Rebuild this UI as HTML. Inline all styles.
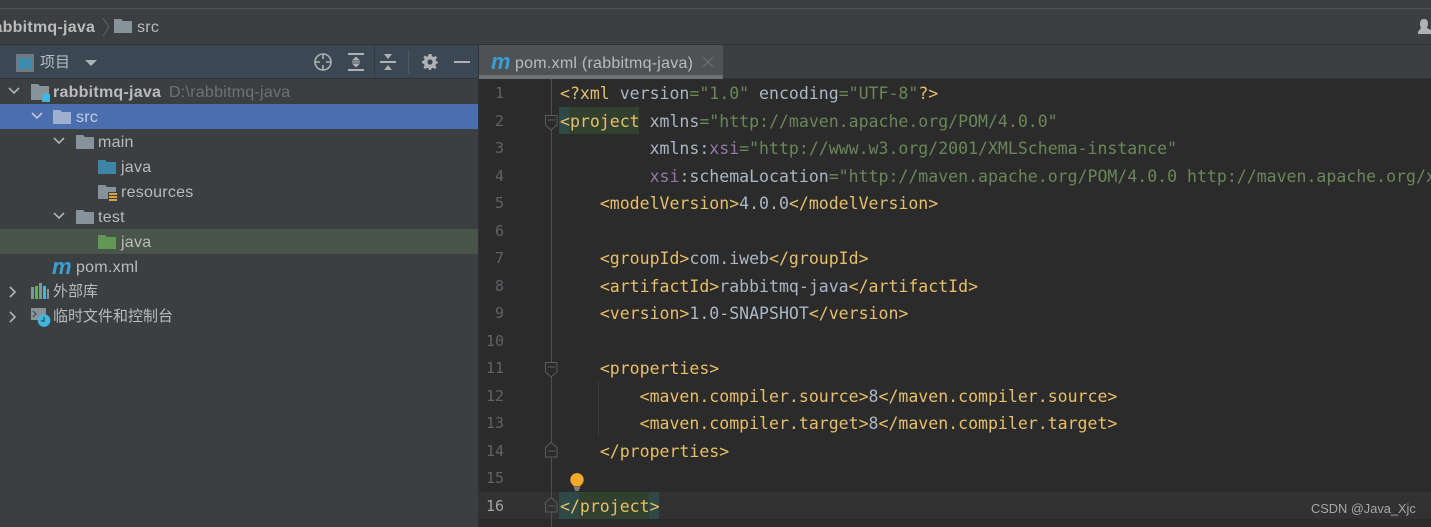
<!DOCTYPE html>
<html><head><meta charset="utf-8">
<style>
html,body{margin:0;padding:0;width:1431px;height:527px;overflow:hidden;background:#3c3f41}
.a{position:absolute}
.t{position:absolute;font:16px "Liberation Sans","Noto Sans CJK SC",sans-serif;letter-spacing:.25px;color:#bbbbbb;white-space:pre;line-height:20px}
.c{font-size:15px;letter-spacing:0}
.l{position:absolute;left:560px;width:871px;overflow:hidden;font:16.55px/27px "DejaVu Sans Mono",monospace;color:#a9b7c6;white-space:pre;height:27px}
.n{position:absolute;left:477px;width:27px;text-align:right;font:15px/27px "DejaVu Sans Mono",monospace;color:#606366}
.g{color:#e8bf6a}.s{color:#6a8759}.x{color:#9876aa}
.f{position:absolute;width:18px;height:14px}
.m{position:absolute;font:italic bold 22px/20px "Liberation Sans",sans-serif;color:#389fd6}
svg{position:absolute;overflow:visible}
</style></head><body>
<div class="a" style="left:0;top:8px;width:1431px;height:1px;background:#515151"></div>
<div class="a" style="left:0;top:44px;width:1431px;height:1px;background:#323232"></div>
<div class="a" style="left:0;top:16px;width:100px;height:24px;overflow:hidden"><div class="t" style="left:-13px;top:2px;font-weight:bold;color:#bbb">rabbitmq-java</div></div>
<svg style="left:100px;top:15px" width="12" height="24"><path d="M3 3L9 12L3 21" fill="none" stroke="#5e6163" stroke-width="1"/></svg>
<svg class="f" style="left:114px;top:19px"><path d="M0 0H7L9 2H18V14H0Z" fill="#87939a"/></svg>
<div class="t" style="left:137px;top:18px">src</div>
<div class="a" style="left:1418px;top:18px;width:13px;height:17px;overflow:hidden"><svg style="left:0;top:0" width="14" height="17"><path d="M6 1C9 1 10 3 10 6C10 8 9 9 9 10L13 12V16H0V14L3 10C2.5 9 2 8 2 6C2 3 3 1 6 1Z" fill="#afb1b3"/></svg></div>

<!-- project header -->
<div class="a" style="left:0;top:45px;width:478px;height:33px;background:#3c4754"></div>
<div class="a" style="left:0;top:78px;width:478px;height:1px;background:#323232"></div>
<div class="a" style="left:16px;top:54px;width:18px;height:18px;background:#6e7a82"></div>
<div class="a" style="left:18px;top:58px;width:14px;height:11px;background:#3d8cb0"></div>
<div class="t c" style="left:40px;top:53px;color:#b4bcc4">项目</div>
<svg style="left:85px;top:59px" width="12" height="8"><path d="M0 1H12L6 7Z" fill="#afb1b3"/></svg>
<svg style="left:314px;top:53px" width="18" height="18" fill="none" stroke="#afb1b3" stroke-width="1.6"><circle cx="9" cy="9" r="8"/><path d="M9 1V6M9 12V17M1 9H6M12 9H17"/></svg>
<svg style="left:348px;top:53px" width="16" height="18" fill="#afb1b3"><rect y="0" width="16" height="2"/><rect y="16" width="16" height="2"/><path d="M8 3.5L12 7.5H4ZM8 14.5L4 10.5H12Z"/><rect x="4" y="8.4" width="8" height="1.2"/></svg>
<svg style="left:380px;top:53px" width="16" height="18" fill="#afb1b3"><rect y="8" width="16" height="2"/><path d="M4 1H12L8 6ZM4 17H12L8 12Z"/></svg>
<div class="a" style="left:374px;top:45px;width:1px;height:33px;background:#323a43"></div>
<div class="a" style="left:408px;top:50px;width:1px;height:24px;background:#515a62"></div>
<svg style="left:422px;top:54px" width="16" height="16"><path d="M6.5 0H9.5L10 2.3L11.8 3.1L13.8 1.8L15 4L13.6 5.6L14 7L16 8V9L13.9 10L13.4 11.5L14.6 13.5L12.8 15L11 13.7L9.6 14.2L9 16H7L6.4 14.2L5 13.7L3.2 15L1.4 13.5L2.6 11.5L2.1 10L0 9V7L2.2 6.4L2.6 5L1.4 3L3.2 1.5L5 2.8L6.2 2.2Z" fill="#afb1b3"/><circle cx="8" cy="8" r="2.6" fill="#3c4754"/></svg>
<div class="a" style="left:454px;top:61px;width:16px;height:2px;background:#afb1b3"></div>

<!-- tree rows -->
<div class="a" style="left:0;top:104px;width:478px;height:25px;background:#4b6eaf"></div>
<div class="a" style="left:0;top:229px;width:478px;height:25px;background:#49544a"></div>
<svg style="left:0;top:0" width="100" height="330" fill="none" stroke="#afb1b3" stroke-width="1.6">
<path d="M9 88L14 93L19 88"/><path d="M32 113L37 118L42 113" stroke="#c0c8d8"/><path d="M54 138L59 143L64 138"/><path d="M54 213L59 218L64 213"/>
<path d="M10 287L15 292L10 297"/><path d="M10 312L15 317L10 322"/>
</svg>
<svg class="f" style="left:31px;top:84px;height:16px"><path d="M0 0H7L9 2H18V16H0Z" fill="#87939a"/><rect x="11" y="10" width="8" height="8" fill="#40b6e0"/></svg>
<div class="t" style="left:53px;top:83px;font-weight:bold">rabbitmq-java</div>
<div class="t" style="left:169px;top:83px;color:#6f7274">D:\rabbitmq-java</div>
<svg class="f" style="left:53px;top:110px"><path d="M0 0H7L9 2H18V14H0Z" fill="#9fb0cf"/></svg>
<div class="t" style="left:76px;top:108px;color:#c4cfe4">src</div>
<svg class="f" style="left:76px;top:135px"><path d="M0 0H7L9 2H18V14H0Z" fill="#87939a"/></svg>
<div class="t" style="left:98px;top:133px">main</div>
<svg class="f" style="left:98px;top:160px"><path d="M0 0H7L9 2H18V14H0Z" fill="#3d86a8"/></svg>
<div class="t" style="left:121px;top:158px">java</div>
<svg class="f" style="left:98px;top:185px"><path d="M0 0H7L9 2H18V14H0Z" fill="#87939a"/><rect x="10" y="7" width="9" height="10" fill="#3c3f41"/><path d="M11 9H19M11 12H19M11 15H19" stroke="#d9a343" stroke-width="2"/></svg>
<div class="t" style="left:121px;top:183px">resources</div>
<svg class="f" style="left:76px;top:210px"><path d="M0 0H7L9 2H18V14H0Z" fill="#87939a"/></svg>
<div class="t" style="left:98px;top:208px">test</div>
<svg class="f" style="left:98px;top:235px"><path d="M0 0H7L9 2H18V14H0Z" fill="#629755"/></svg>
<div class="t" style="left:121px;top:233px">java</div>
<div class="m" style="left:52px;top:257px">m</div>
<div class="t" style="left:76px;top:258px">pom.xml</div>
<svg style="left:31px;top:283px" width="18" height="16"><rect x="0" y="4" width="3" height="12" fill="#87939a"/><rect x="4" y="3" width="3" height="13" fill="#62b543"/><rect x="8" y="0" width="3" height="16" fill="#87939a"/><rect x="12" y="3" width="3" height="13" fill="#40b6e0"/><rect x="16" y="6" width="2" height="10" fill="#87939a"/></svg>
<div class="t c" style="left:53px;top:282px">外部库</div>
<svg style="left:31px;top:308px" width="20" height="19"><rect width="15" height="12" fill="#87939a"/><path d="M2 3L5 6L2 9" stroke="#3c3f41" fill="none"/><circle cx="13" cy="12.5" r="6.3" fill="#40b6e0"/><path d="M13 9V13H10" stroke="#2b2b2b" fill="none"/></svg>
<div class="t c" style="left:53px;top:307px">临时文件和控制台</div>

<!-- splitter -->
<div class="a" style="left:478px;top:45px;width:1px;height:482px;background:#323232"></div>

<!-- tab -->
<div class="a" style="left:479px;top:45px;width:244px;height:30px;background:#4e5254"></div>
<div class="a" style="left:479px;top:75px;width:244px;height:4px;background:#6d7276"></div>
<div class="m" style="left:491px;top:52px;color:#389fd6">m</div>
<div class="t" style="left:515px;top:54px;color:#bbb">pom.xml (rabbitmq-java)</div>
<svg style="left:703px;top:57px" width="10" height="10"><path d="M0 0L10 10M10 0L0 10" stroke="#6e7173" stroke-width="1.2"/></svg>
<div class="a" style="left:723px;top:78px;width:708px;height:1px;background:#323232"></div>

<!-- editor -->
<div class="a" style="left:479px;top:79px;width:952px;height:448px;background:#2b2b2b"></div>
<div class="a" style="left:479px;top:492px;width:952px;height:27px;background:#323232"></div>
<div class="a" style="left:551px;top:79px;width:1px;height:448px;background:#4f4f4f"></div>
<div class="a" style="left:598px;top:382px;width:1px;height:55px;background:#3b3b3b"></div>

<div class="a" style="left:559px;top:107px;width:80px;height:27px;background:#32402f"></div>
<div class="a" style="left:559px;top:107px;width:10px;height:27px;background:#2f4a46"></div>
<div class="a" style="left:559px;top:492px;width:100px;height:27px;background:#32402f"></div>
<div class="a" style="left:559px;top:492px;width:20px;height:27px;background:#2f4a46"></div>
<div class="a" style="left:649px;top:492px;width:10px;height:27px;background:#2f4a46"></div>

<svg style="left:545px;top:115px" width="13" height="16" fill="#2b2b2b" stroke="#5a5d5f"><path d="M0.5 0.5H12V10L6 15L0.5 10Z"/><path d="M3 5H10"/></svg>
<svg style="left:545px;top:362px" width="13" height="16" fill="#2b2b2b" stroke="#5a5d5f"><path d="M0.5 0.5H12V10L6 15L0.5 10Z"/><path d="M3 5H10"/></svg>
<svg style="left:545px;top:442px" width="13" height="16" fill="#2b2b2b" stroke="#5a5d5f"><path d="M6 0.5L12 5.5V15H0.5V5.5Z"/><path d="M3 9H10"/></svg>
<svg style="left:545px;top:497px" width="13" height="16" fill="#323232" stroke="#5a5d5f"><path d="M6 0.5L12 5.5V15H0.5V5.5Z"/><path d="M3 9H10"/></svg>

<div class="n" style="top:80px">1</div><div class="n" style="top:108px">2</div><div class="n" style="top:135px">3</div><div class="n" style="top:163px">4</div><div class="n" style="top:190px">5</div><div class="n" style="top:218px">6</div><div class="n" style="top:245px">7</div><div class="n" style="top:273px">8</div><div class="n" style="top:300px">9</div><div class="n" style="top:328px">10</div><div class="n" style="top:355px">11</div><div class="n" style="top:383px">12</div><div class="n" style="top:410px">13</div><div class="n" style="top:438px">14</div><div class="n" style="top:465px">15</div><div class="n" style="top:493px;color:#a4a3a3">16</div>

<div class="l" style="top:80px"><span class="g">&lt;?xml</span> version<span class="s">="1.0"</span> encoding<span class="s">="UTF-8"</span><span class="g">?&gt;</span></div>
<div class="l" style="top:108px"><span class="g">&lt;project</span> xmlns<span class="s">="http://maven.apache.org/POM/4.0.0"</span></div>
<div class="l" style="top:135px">         xmlns:<span class="x">xsi</span><span class="s">="http://www.w3.org/2001/XMLSchema-instance"</span></div>
<div class="l" style="top:163px">         <span class="x">xsi</span>:schemaLocation<span class="s">="http://maven.apache.org/POM/4.0.0 http://maven.apache.org/xsd/maven-4.0.0.xsd"</span></div>
<div class="l" style="top:190px">    <span class="g">&lt;modelVersion&gt;</span>4.0.0<span class="g">&lt;/modelVersion&gt;</span></div>
<div class="l" style="top:245px">    <span class="g">&lt;groupId&gt;</span>com.iweb<span class="g">&lt;/groupId&gt;</span></div>
<div class="l" style="top:273px">    <span class="g">&lt;artifactId&gt;</span>rabbitmq-java<span class="g">&lt;/artifactId&gt;</span></div>
<div class="l" style="top:300px">    <span class="g">&lt;version&gt;</span>1.0-SNAPSHOT<span class="g">&lt;/version&gt;</span></div>
<div class="l" style="top:355px">    <span class="g">&lt;properties&gt;</span></div>
<div class="l" style="top:383px">        <span class="g">&lt;maven.compiler.source&gt;</span>8<span class="g">&lt;/maven.compiler.source&gt;</span></div>
<div class="l" style="top:410px">        <span class="g">&lt;maven.compiler.target&gt;</span>8<span class="g">&lt;/maven.compiler.target&gt;</span></div>
<div class="l" style="top:438px">    <span class="g">&lt;/properties&gt;</span></div>
<div class="l" style="top:493px"><span class="g">&lt;/project&gt;</span></div>

<svg style="left:570px;top:473px" width="14" height="18"><path d="M7 0A6.8 6.8 0 0 1 10.5 12.6V13.5H3.5V12.6A6.8 6.8 0 0 1 7 0Z" fill="#f2a82a"/><path d="M4 15H10M5 17H9" stroke="#afb1b3" stroke-width="1.3"/></svg>

<div class="a" style="left:1311px;top:501px;font:12.8px/16px 'Liberation Sans',sans-serif;color:#a8a8a8;white-space:pre">CSDN @Java_Xjc</div>
</body></html>
